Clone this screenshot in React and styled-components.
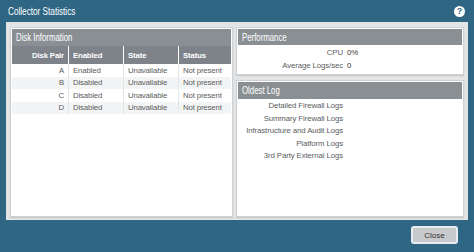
import styled, { createGlobalStyle } from 'styled-components'

const GlobalStyle = createGlobalStyle`
  html, body {
    margin: 0;
    padding: 0;
    background: #2f6683;
  }
`

const Dialog = styled.div`
  width: 474px;
  height: 252px;
  background: #2f6683;
  display: flex;
  flex-direction: column;
  font-family: 'Liberation Sans', Arial, sans-serif;
  overflow: hidden;
`

const TitleBar = styled.div`
  height: 22px;
  display: flex;
  align-items: center;
  justify-content: space-between;
  padding: 0 9px 0 8px;
  box-sizing: border-box;
`

// no narrow font installed, squeeze Liberation Sans instead
const Narrow = styled.span`
  display: inline-block;
  font-family: 'Liberation Sans', sans-serif;
  font-size: ${(p) => p.$size}px;
  transform: scaleX(0.78);
  transform-origin: left center;
  white-space: nowrap;
`

const Title = styled(Narrow)`
  color: #ffffff;
`

const HelpIcon = styled.span`
  width: 11px;
  height: 11px;
  border-radius: 50%;
  background: #ffffff;
  color: #2f6683;
  font-size: 9px;
  font-weight: bold;
  display: flex;
  align-items: center;
  justify-content: center;
  line-height: 1;
`

const Body = styled.div`
  margin: 0 6px;
  height: 198px;
  background: #e3e4e5;
  padding: 5px 4px 3px 4px;
  box-sizing: border-box;
  display: flex;
  gap: 3px;
`

const Panel = styled.div`
  background: #ffffff;
  border: 1px solid #cfd0d2;
  box-shadow: 0 1px 1px rgba(0, 0, 0, 0.12);
  display: flex;
  flex-direction: column;
  flex: ${(p) => p.$grow || 'none'};
  height: ${(p) => (p.$height ? p.$height + 'px' : 'auto')};
  box-sizing: border-box;
`

const PanelHeader = styled.div`
  height: 17px;
  margin: 1px 1px 0 1px;
  background: #8a8f94;
  color: #ffffff;
  display: flex;
  align-items: center;
  padding-left: 4px;
`

const LeftColumn = styled.div`
  width: 223px;
  display: flex;
`

const RightColumn = styled.div`
  flex: 1;
  display: flex;
  flex-direction: column;
  gap: 5px;
`

const Table = styled.table`
  border-collapse: collapse;
  margin: 0 1px;
  width: calc(100% - 2px);
  font-size: 7.8px;
  letter-spacing: -0.15px;
  color: #5a5d60;
`

const Th = styled.th`
  background: #7d8389;
  color: #ffffff;
  font-weight: bold;
  height: 18px;
  padding: 0 4px;
  text-align: ${(p) => p.$align || 'left'};
  border-left: 1px solid #ffffff;
  width: ${(p) => p.$w}px;
  &:first-child {
    border-left: none;
  }
`

const Tr = styled.tr`
  background: ${(p) => (p.$alt ? '#f3f4f5' : '#ffffff')};
`

const Td = styled.td`
  height: 12.5px;
  padding: 0 4px;
  text-align: ${(p) => p.$align || 'left'};
  border-left: 1px solid #e4e5e6;
  &:first-child {
    border-left: none;
  }
`

const InfoList = styled.div`
  display: grid;
  grid-template-columns: 106px 1fr;
  column-gap: 4px;
  padding: ${(p) => p.$pad || '2px 0'};
  font-size: 7.8px;
  letter-spacing: -0.1px;
  color: #5a5d60;
`

const Label = styled.div`
  text-align: right;
  height: 12.5px;
  line-height: 12.5px;
`

const Value = styled.div`
  height: 12.5px;
  line-height: 12.5px;
  color: #333;
`

const Footer = styled.div`
  flex: 1;
  display: flex;
  justify-content: flex-end;
  align-items: flex-start;
  padding: 6px 16px 0 0;
`

const CloseButton = styled.button`
  width: 47px;
  height: 18px;
  background: #c8c9cc;
  border: 2px solid #e6ecef;
  border-radius: 3px;
  font-family: 'Liberation Sans', sans-serif;
  font-size: 8px;
  color: #333;
  padding: 0;
  cursor: pointer;
`

const disks = [
  { pair: 'A', enabled: 'Enabled', state: 'Unavailable', status: 'Not present' },
  { pair: 'B', enabled: 'Disabled', state: 'Unavailable', status: 'Not present' },
  { pair: 'C', enabled: 'Disabled', state: 'Unavailable', status: 'Not present' },
  { pair: 'D', enabled: 'Disabled', state: 'Unavailable', status: 'Not present' },
]

const oldestLogs = [
  'Detailed Firewall Logs',
  'Summary Firewall Logs',
  'Infrastructure and Audit Logs',
  'Platform Logs',
  '3rd Party External Logs',
]

const App = () => {
  return (
    <>
      <GlobalStyle />
      <Dialog>
        <TitleBar>
          <Title $size={10.5}>Collector Statistics</Title>
          <HelpIcon>?</HelpIcon>
        </TitleBar>
        <Body>
          <LeftColumn>
            <Panel $grow="1">
              <PanelHeader>
                <Narrow $size={10}>Disk Information</Narrow>
              </PanelHeader>
              <Table>
                <thead>
                  <tr>
                    <Th $align="right" $w={48}>Disk Pair</Th>
                    <Th $w={46}>Enabled</Th>
                    <Th $w={46}>State</Th>
                    <Th>Status</Th>
                  </tr>
                </thead>
                <tbody>
                  {disks.map((d, i) => (
                    <Tr key={d.pair} $alt={i % 2 === 1}>
                      <Td $align="right">{d.pair}</Td>
                      <Td>{d.enabled}</Td>
                      <Td>{d.state}</Td>
                      <Td>{d.status}</Td>
                    </Tr>
                  ))}
                </tbody>
              </Table>
            </Panel>
          </LeftColumn>
          <RightColumn>
            <Panel $height={48}>
              <PanelHeader>
                <Narrow $size={10}>Performance</Narrow>
              </PanelHeader>
              <InfoList>
                <Label>CPU</Label>
                <Value>0%</Value>
                <Label>Average Logs/sec</Label>
                <Value>0</Value>
              </InfoList>
            </Panel>
            <Panel $grow="1">
              <PanelHeader>
                <Narrow $size={10}>Oldest Log</Narrow>
              </PanelHeader>
              <InfoList $pad="1px 0">
                {oldestLogs.map((l) => [
                  <Label key={l}>{l}</Label>,
                  <Value key={l + '-v'} />,
                ])}
              </InfoList>
            </Panel>
          </RightColumn>
        </Body>
        <Footer>
          <CloseButton>Close</CloseButton>
        </Footer>
      </Dialog>
    </>
  )
}

export default App
